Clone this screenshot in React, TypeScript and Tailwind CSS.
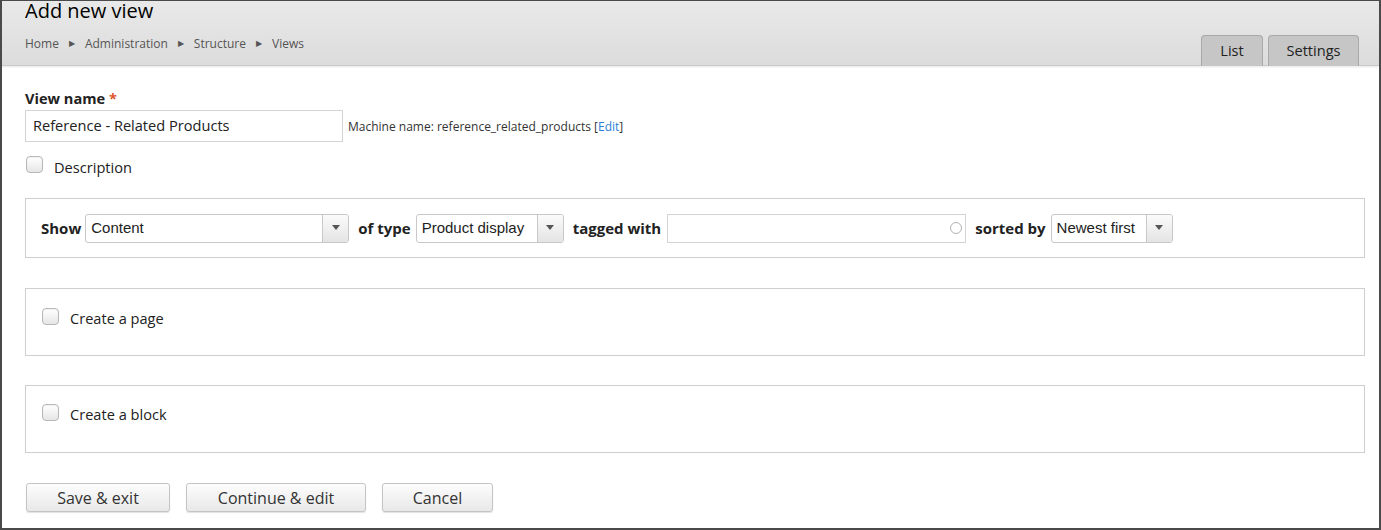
import React from "react";

const sans = "font-['Open_Sans','Noto_Sans',sans-serif]";
const helv = "font-['Liberation_Sans',Arial,sans-serif]";

function Checkbox() {
  return (
    <span className="inline-block w-[17px] h-[17px] rounded-[4px] border border-[#b8b8b8] bg-gradient-to-b from-[#ffffff] to-[#e6e6e6] shadow-[inset_0_1px_1px_rgba(0,0,0,0.05)]" />
  );
}

function Select({ value, width }: { value: string; width: string }) {
  return (
    <div className={`flex h-[29px] ${width} rounded-[3px] border border-[#c8c8c8] bg-white overflow-hidden`}>
      <div className={`flex-1 flex items-center pl-[5px] text-[15px] text-[#222] ${helv}`}>{value}</div>
      <div className="w-[26px] flex items-center justify-center border-l border-[#c8c8c8] bg-gradient-to-b from-[#fbfbfb] to-[#e4e4e4]">
        <svg width="8" height="6" viewBox="0 0 8 6">
          <path d="M0 0 L8 0 L4 5 Z" fill="#555" />
        </svg>
      </div>
    </div>
  );
}

function Crumb() {
  return <span className="mx-[10px] text-[8px] text-[#555] relative top-[-1px]">▶</span>;
}

function Button({ label, width }: { label: string; width: string }) {
  return (
    <button
      className={`${width} h-[29px] rounded-[3px] border border-[#c4c4c4] bg-gradient-to-b from-[#fdfdfd] to-[#e8e8e8] shadow-[0_1px_1px_rgba(0,0,0,0.12)] text-[16px] text-[#333] ${sans}`}
    >
      {label}
    </button>
  );
}

export default function App() {
  return (
    <div className={`w-[1381px] h-[530px] overflow-hidden border-x-2 border-b-2 border-t border-[#4a4a4a] bg-white ${sans}`}>
      {/* Header */}
      <div className="relative h-[65px] bg-gradient-to-b from-[#e9e9e9] to-[#dcdcdc] border-b border-[#c9c9c9] shadow-[0_1px_2px_rgba(0,0,0,0.1)]">
        <div className="pl-[23px]">
          <h1 className="text-[20px] leading-[20px] text-black font-normal">Add new view</h1>
          <div className="mt-[15px] text-[12px] leading-[16px] text-[#555] flex items-center">
            <span>Home</span>
            <Crumb />
            <span>Administration</span>
            <Crumb />
            <span>Structure</span>
            <Crumb />
            <span>Views</span>
          </div>
        </div>
        <div className="absolute right-[20px] bottom-[-1px] flex gap-[5px]">
          <div className="w-[62px] h-[31px] rounded-t-[4px] border border-b-0 border-[#a9a9a9] bg-[#c6c6c6] flex items-center justify-center text-[14.6px] text-[#222]">
            List
          </div>
          <div className="w-[91px] h-[31px] rounded-t-[4px] border border-b-0 border-[#a9a9a9] bg-[#c6c6c6] flex items-center justify-center text-[14.6px] text-[#222]">
            Settings
          </div>
        </div>
      </div>

      {/* Body */}
      <div className="pl-[23px] pr-[14px] pt-[23px]">
        <div className="text-[14.6px] leading-[18px] font-bold text-[#222]">
          View name <span className="text-[#e0552a]">*</span>
        </div>
        <div className="mt-[3px] flex items-center">
          <div className="w-[318px] h-[32px] border border-[#d4d4d4] flex items-center pl-[7px] text-[14.6px] text-[#222]">
            Reference - Related Products
          </div>
          <div className="ml-[5px] mt-[2px] text-[12px] text-[#333]">
            Machine name: reference_related_products [<span className="text-[#2d7fd6]">Edit</span>]
          </div>
        </div>
        <div className="mt-[13px] flex items-center">
          <span className="ml-[1px]"><Checkbox /></span>
          <span className="ml-[11px] text-[14.6px] text-[#222] relative top-[1px]">Description</span>
        </div>

        <div className="mt-[19px] h-[60px] border border-[#cfcfcf] flex items-center pl-[15px]">
          <span className="text-[15px] font-bold text-[#222] mr-[4px]">Show</span>
          <Select value="Content" width="w-[264px]" />
          <span className="ml-[9px] mr-[5px] text-[15px] font-bold text-[#222]">of type</span>
          <Select value="Product display" width="w-[148px]" />
          <span className="ml-[9px] mr-[6px] text-[15px] font-bold text-[#222]">tagged with</span>
          <div className="w-[299px] h-[29px] border border-[#d4d4d4] bg-white flex items-center justify-end pr-[3px]">
            <span className="w-[12px] h-[12px] rounded-full border-[1.5px] border-[#b0b0b0]" />
          </div>
          <span className="ml-[9px] mr-[5px] text-[15px] font-bold text-[#222]">sorted by</span>
          <Select value="Newest first" width="w-[122px]" />
        </div>

        <div className="mt-[30px] h-[68px] border border-[#cfcfcf] pl-[16px] pt-[17px]">
          <div className="flex items-center">
            <Checkbox />
            <span className="ml-[11px] text-[14.6px] text-[#222] relative top-[2px]">Create a page</span>
          </div>
        </div>

        <div className="mt-[29px] h-[68px] border border-[#cfcfcf] pl-[16px] pt-[16px]">
          <div className="flex items-center">
            <Checkbox />
            <span className="ml-[11px] text-[14.6px] text-[#222] relative top-[2px]">Create a block</span>
          </div>
        </div>

        <div className="mt-[30px] ml-[1px] flex gap-[16px]">
          <Button label="Save & exit" width="w-[144px]" />
          <Button label="Continue & edit" width="w-[180px]" />
          <Button label="Cancel" width="w-[111px]" />
        </div>
      </div>
    </div>
  );
}
